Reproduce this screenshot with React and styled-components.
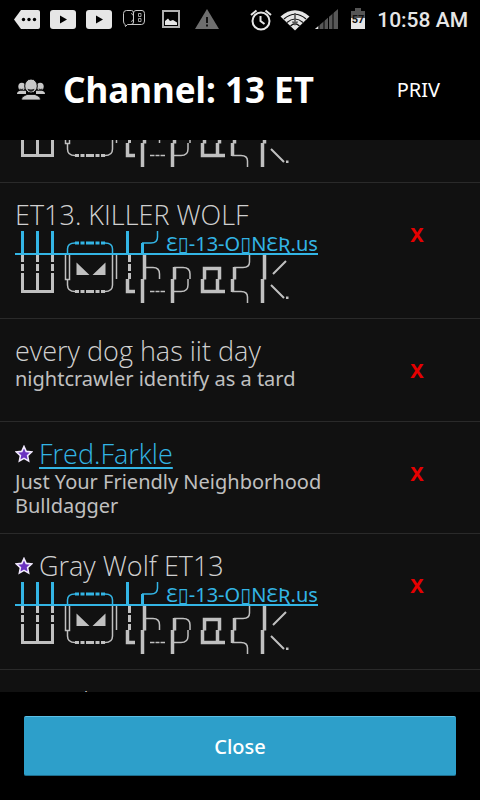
import React, { useLayoutEffect, useRef } from 'react';
import styled, { createGlobalStyle } from 'styled-components';

const GlobalStyle = createGlobalStyle`
    * {
        box-sizing: border-box;
    }
    body {
        margin: 0;
        background: #000;
        font-family: 'Noto Sans', 'Open Sans', 'DejaVu Sans', sans-serif;
    }
`

const Screen = styled.div`
    height: 100vh;
    display: flex;
    flex-direction: column;
    background: #000;
    color: #c0c0c0;
`

const StatusBar = styled.div`
    display: flex;
    align-items: center;
    justify-content: space-between;
    height: 40px;
    padding: 0 12px 0 14px;
    flex: none;
`

const StatusGroup = styled.div`
    display: flex;
    align-items: center;
    gap: ${({ $gap }) => $gap}px;

    svg {
        display: block;
    }
`

const Clock = styled.span`
    margin-left: 2px;
    font-family: Roboto, sans-serif;
    font-weight: 500;
    font-size: 21px;
    color: #e6e6e6;
    white-space: nowrap;
`

const Header = styled.header`
    display: flex;
    align-items: center;
    height: 100px;
    padding: 0 32px 0 17px;
    gap: 18px;
    flex: none;
`

const Title = styled.h1`
    flex: 1;
    margin: 0;
    font-size: 35px;
    font-weight: 700;
    line-height: 48px;
    color: #fff;
    white-space: nowrap;
`

const PrivButton = styled.button`
    border: 0;
    padding: 8px;
    background: none;
    font-family: inherit;
    font-size: 20px;
    line-height: 24px;
    color: #fff;
`

const List = styled.ul`
    flex: 1;
    min-height: 0;
    margin: 0;
    padding: 0;
    overflow-y: auto;
    scrollbar-width: none;
    list-style: none;
    background: #111;
`

const Row = styled.li`
    display: flex;
    align-items: flex-start;
    border-bottom: 1px solid #2a2a2a;
`

const Details = styled.div`
    flex: 1;
    min-width: 0;
    padding: 15px 0 15px 15px;
`

const Name = styled.div`
    display: flex;
    align-items: center;
    gap: 6px;
    font-family: 'Open Sans', 'Noto Sans', sans-serif;
    font-size: 27px;
    font-weight: 350;
    line-height: 33px;
    color: #d0d0d0;
    white-space: nowrap;
`

const NameLink = styled.a`
    color: #33b5e5;
    text-decoration: underline;
    text-decoration-thickness: 2px;
    text-underline-offset: 3px;
`

const Status = styled.div`
    max-width: 340px;
    font-size: 20px;
    line-height: 24px;
`

const RemoveButton = styled.button`
    width: 126px;
    height: 102px;
    flex: none;
    border: 0;
    padding: 0;
    background: none;
    font-family: inherit;
    font-size: 20px;
    font-weight: 700;
    color: #e60000;
`

const ArtLink = styled.a`
    display: flex;
    width: fit-content;
    height: 24px;
    border-bottom: 2px solid #33b5e5;
    color: #33b5e5;
    font-size: 20px;
    line-height: 26px;
    white-space: nowrap;
    text-decoration: none;

    svg {
        display: block;
        overflow: visible;
        flex: none;
    }
`

const Lower = styled.svg`
    display: block;
`

const Footer = styled.footer`
    display: flex;
    padding: 24px;
    flex: none;
`

const CloseButton = styled.button`
    flex: 1;
    height: 60px;
    border: 0;
    border-top: 1px solid #5cc0e6;
    border-bottom: 1px solid #1d6d8c;
    border-radius: 2px;
    padding: 0;
    background: #2d9fca;
    font-family: inherit;
    font-size: 20px;
    font-weight: 500;
    color: #fff;
`

const DASHES = 'M75 0h4M80.5 0h4M86 0h8M95.5 0h4M101 0h4'

const Banner = () => (
    <>
        <ArtLink href="#site">
            <svg width="151" height="24" viewBox="15 0 151 24" fill="none" stroke="#33b5e5" aria-hidden="true">
                <path strokeWidth="3" d="M22.5 0V24M37.5 0V24M52.5 0V24M127.5 0V24M142.5 12V24" />
                <path strokeWidth="3" d={DASHES} transform="translate(0 12)" />
                <path strokeWidth="1.5" d="M67.5 24V18Q67.5 12 75 12M105 12Q112.5 12 112.5 18V24M142 12H151Q157.5 12 157.5 6V0" />
            </svg>
            Ɛ▯-13-O▯NƐƦ.us
        </ArtLink>
        <Lower width="280" height="48" viewBox="15 24 280 48" fill="none" stroke="#c0c0c0" aria-hidden="true">
            <path strokeWidth="3" d="M22.5 24v7m0 2v7m0 2V60.5H52.5V42m0-2v-7m0-2v-7M37.5 24v7m0 2v7m0 2V60M129.5 24v7m0 2v7m0 2v6" />
            <path strokeWidth="3" d={DASHES} transform="translate(0 60.5)" />
            <path strokeWidth="1.5" d="M65.5 24V48.5H69.5V24M112.5 24V48M116.5 24V48M67.5 48V54Q67.5 60.5 75 60.5M105 60.5Q112.5 60.5 112.5 54V48" />
            <path fill="#c0c0c0" stroke="none" d="M76.5 31.5V44H89.5ZM105.5 31.5V44H92.5ZM286 65.5h2.5v2.5h-2.5z" />
            <path strokeWidth="3.5" d="M127.5 48V60.5H135M144.5 24V48.5M142.5 48V72M174.5 36V48.5M172.5 48V72M204.5 48.5V37.5H219.5V48.5M202.5 48V60.5H225M217.5 48V60M234.5 36V48.5M232.5 48V61M264.5 24V48.5M262.5 48V72" />
            <path strokeWidth="1.5" d="M145 36.5H153Q159.5 36.5 159.5 43V48M150 60.5h4.5m1 0h4m1 0h4.5M174 36.5H183Q190 36.5 190 43V48M188 48V54Q188 60.5 181 60.5H172.5M249.5 24V31Q249.5 36.5 243 36.5H234M232 60.5H241Q247.5 60.5 247.5 66V72" />
            <path strokeWidth="2" d="M273 43L286 30M271 54L284 67" />
        </Lower>
    </>
)

const Star = () => (
    <svg width="18" height="18" viewBox="0 0 18 18" aria-hidden="true">
        <path d="M9 1.5l2.200 4.900 5.300.6-3.900 3.600 1 5.300L9 13.300l-4.600 2.600 1-5.300L1.500 7l5.300-.6z" fill="#6a32c0" stroke="#f2eaff" strokeWidth="1.6" />
    </svg>
)

const People = () => (
    <svg width="28" height="22" viewBox="0 0 28 22" fill="#c8c8c8" aria-hidden="true">
        <ellipse cx="4.8" cy="7.5" rx="3.5" ry="3.8" />
        <ellipse cx="23.2" cy="7.5" rx="3.5" ry="3.8" />
        <path d="M0 15q0-2.500 3-3.200h6V15zM28 15q0-2.500-3-3.200h-6V15z" />
        <ellipse cx="14" cy="7" rx="6.3" ry="7" stroke="#000" />
        <path d="M4.500 21c0-3.500 2.500-4 5.500-5.500h8c3 1.500 5.500 2 5.500 5.500z" stroke="#000" strokeWidth=".8" />
        <path d="M10.500 9.800q3.500 1.200 7 0c-.5 4-6.500 4-7 0z" fill="#222" />
        <path d="M2.500 9.500q2 .8 4 0-.5 2.500-2 2.500t-2-2.500zM21.500 9.500q2 .8 4 0-.5 2.500-2 2.500t-2-2.500z" fill="#333" />
    </svg>
)

const PlayIcon = () => (
    <svg width="26" height="20" viewBox="0 0 26 20" aria-hidden="true">
        <rect width="26" height="19" rx="3" fill="#e6e6e6" />
        <path d="M10 5.500v8l7-4z" fill="#000" />
    </svg>
)

const StatusIcons = () => (
    <StatusGroup $gap={10}>
        <svg width="26" height="20" viewBox="0 0 26 20" aria-hidden="true">
            <path d="M7 0H24q2 0 2 2V17q0 2-2 2H7L0 9.500z" fill="#e6e6e6" />
            <circle cx="9.5" cy="9.5" r="1.7" />
            <circle cx="15" cy="9.5" r="1.7" />
            <circle cx="20.5" cy="9.5" r="1.7" />
        </svg>
        <PlayIcon />
        <PlayIcon />
        <svg width="24" height="20" viewBox="0 0 24 20" fill="none" stroke="#c8c8c8" aria-hidden="true">
            <path d="M4.500 .5H9.500Q11.500 .5 11.500 3V12Q11.500 14.500 9 14.500H5.500L3.500 16.500 3 14.500Q1.500 13.500 1.500 11V3.500Q1.500 .5 4.500 .5zM11.500 3Q11.500 .5 14 .5H20Q22.500 .5 22.500 3.500V11Q22.500 14.500 19.500 14.500H9" />
            <path d="M9 3.500q2 0 2 2M9 11.500q2 0 2-2M16.500 3.500H19V6.500H16.500zM16.500 8.500H19V11.500H16.500z" strokeWidth=".8" />
        </svg>
        <svg width="28" height="20" viewBox="0 0 28 20" aria-hidden="true">
            <path d="M7 1H23V17H7z" fill="none" stroke="#b0b0b0" strokeWidth="2" />
            <path d="M9 15v-4l3-2.500 2 2.500 3-1 4 2.500v2.500z" fill="#e6e6e6" />
        </svg>
        <svg width="26" height="22" viewBox="0 0 26 22" aria-hidden="true">
            <path d="M13 0L25 20H1z" fill="#6e6e6e" />
            <path d="M12 8h2v6h-2zM12 15.500h2v2h-2z" fill="#111" />
        </svg>
    </StatusGroup>
)

const SystemIcons = () => (
    <StatusGroup $gap={5}>
        <svg width="26" height="24" viewBox="0 0 26 24" fill="none" stroke="#e6e6e6" strokeWidth="2" aria-hidden="true">
            <circle cx="12" cy="13" r="8.5" />
            <path d="M11.500 8v5l4 3M2 7L7.500 2.500M22 7L16.500 2.500" />
        </svg>
        <svg width="30" height="24" viewBox="0 0 30 24" aria-hidden="true">
            <path d="M0.500 8.500Q15-4 29.500 8.500L15 22.500z" fill="#e6e6e6" />
            <path d="M4 11Q15 1.500 26 11M7 14.500Q15 7.500 23 14.500M10.500 18Q15 13.500 19.500 18" fill="none" stroke="#111" strokeWidth="1.2" />
            <path d="M15 5v10M12.500 13.500l2.500 3 2.500-3" fill="none" stroke="#555" strokeWidth="1.6" />
        </svg>
        <svg width="26" height="22" viewBox="0 0 26 22" aria-hidden="true">
            <path d="M0 20L23 0V20z" fill="#585858" />
            <path d="M0 20L3.500 17V20z" fill="#e6e6e6" />
            <path d="M4 0V21M9 0V21M13.500 0V21M18 0V21" stroke="#000" />
        </svg>
        <svg width="24" height="24" viewBox="0 0 24 24" aria-hidden="true">
            <path d="M5 3h4V0h6v3h4v8H5z" fill="#555" />
            <path d="M5 10h14v11H5z" fill="#e6e6e6" />
            <text x="12" y="15" textAnchor="middle" fontFamily="Roboto, sans-serif" fontWeight="700" fontSize="11" fill="#111">57</text>
        </svg>
        <Clock>10:58 AM</Clock>
    </StatusGroup>
)

const members = [
    { name: 'Wolf ET13', banner: true },
    { name: 'ET13. KILLER WOLF', banner: true },
    { name: 'every dog has iit day', status: 'nightcrawler identify as a tard' },
    { name: 'Fred.Farkle', star: true, link: true, status: 'Just Your Friendly Neighborhood Bulldagger' },
    { name: 'Gray Wolf ET13', star: true, banner: true },
    { name: 'crunch', status: '' },
]

const Member = ({ name, star, link, banner, status }) => (
    <Row>
        <Details>
            <Name>
                {star && <Star />}
                {link ? <NameLink href="#profile">{name}</NameLink> : <span>{name}</span>}
            </Name>
            {banner ? <Banner /> : <Status>{status}</Status>}
        </Details>
        <RemoveButton aria-label={`Remove ${name}`}>X</RemoveButton>
    </Row>
)

const App = () => {
    const listRef = useRef(null)

    // open with the first member mostly scrolled away
    useLayoutEffect(() => {
        listRef.current.scrollTop = 93
    }, [])

    return (
        <Screen>
            <GlobalStyle />
            <StatusBar>
                <StatusIcons />
                <SystemIcons />
            </StatusBar>
            <Header>
                <People />
                <Title>Channel: 13 ET</Title>
                <PrivButton>PRIV</PrivButton>
            </Header>
            <List ref={listRef}>
                {members.map((member) => (
                    <Member key={member.name} {...member} />
                ))}
            </List>
            <Footer>
                <CloseButton>Close</CloseButton>
            </Footer>
        </Screen>
    )
}

export default App
